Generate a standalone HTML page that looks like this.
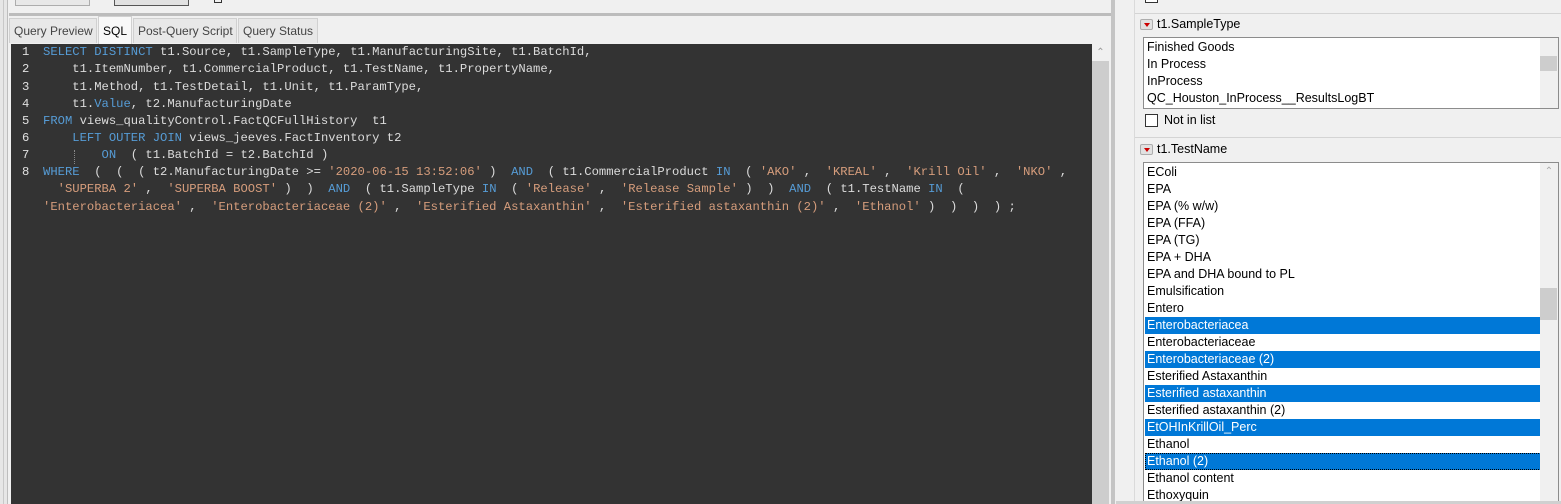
<!DOCTYPE html>
<html><head><meta charset="utf-8"><style>
*{margin:0;padding:0;box-sizing:border-box}
body{width:1561px;height:504px;background:#f0f0f0;position:relative;overflow:hidden;font-family:"Liberation Sans",sans-serif;font-size:12px;color:#000}
.abs{position:absolute}
.ed{left:11px;top:44px;width:1081px;height:460px;background:#333333;font-family:"Liberation Mono",monospace;font-size:12.2px;color:#dcdcdc;white-space:pre}
.ln{position:absolute;left:32px;height:17px;line-height:17px}
.no{position:absolute;left:11px;height:17px;line-height:17px;color:#e0e0e0}
.k{color:#569cd6}.s{color:#d69d7c}
.tab{position:absolute;top:18px;height:25px;line-height:24px;border:1px solid #d0d0d0;border-bottom:none;background:#e8e8e8;color:#444;padding:0 4px;font-size:12px;white-space:nowrap}
.li{position:absolute;left:1px;height:17px;line-height:17px;padding-left:2px;width:396px;white-space:nowrap;font-size:12.5px}
.sel{background:#0078d7;color:#fff}
.dd{position:absolute;width:13px;height:11px;border:1px solid #adadad;background:#e1e1e1;border-radius:2px}
.dd:after{content:"";position:absolute;left:3px;top:3px;border-left:3px solid transparent;border-right:3px solid transparent;border-top:4px solid #c00}
</style></head><body>
<div class="abs" style="left:0;top:0;width:8px;height:504px;background:#e6e6e6;border-right:1px solid #bdbdbd"></div>
<div class="abs" style="left:3px;top:0;width:1px;height:504px;background:#c8c8c8"></div>
<div class="abs" style="left:15px;top:0;width:75px;height:6px;border:1px solid #adadad;border-top:none;background:#e8e8e8"></div>
<div class="abs" style="left:114px;top:0;width:75px;height:6px;border:1px solid #555;border-top:none;background:#e1e1e1"></div>
<div class="abs" style="left:214px;top:0;width:8px;height:3px;border:1px solid #333;border-top:none"></div>
<div class="abs" style="left:9px;top:13px;width:1103px;height:3px;background:#bcbcbc"></div>
<div class="tab" style="left:9px;width:88px">Query Preview</div>
<div class="tab" style="left:98px;width:34px;background:#f8f8f8;color:#000;top:16px;height:28px;line-height:28px">SQL</div>
<div class="tab" style="left:133px;width:104px">Post-Query Script</div>
<div class="tab" style="left:238px;width:80px">Query Status</div>
<div class="abs ed">
<div class="no" style="top:0">1</div><div class="no" style="top:17px">2</div><div class="no" style="top:35px">3</div><div class="no" style="top:52px">4</div><div class="no" style="top:69px">5</div><div class="no" style="top:86px">6</div><div class="no" style="top:103px">7</div><div class="no" style="top:120px">8</div>
<div class="ln" style="top:0"><span class="k">SELECT DISTINCT</span> t1.Source, t1.SampleType, t1.ManufacturingSite, t1.BatchId,</div>
<div class="ln" style="top:17px">    t1.ItemNumber, t1.CommercialProduct, t1.TestName, t1.PropertyName,</div>
<div class="ln" style="top:35px">    t1.Method, t1.TestDetail, t1.Unit, t1.ParamType,</div>
<div class="ln" style="top:52px">    t1.<span class="k">Value</span>, t2.ManufacturingDate</div>
<div class="ln" style="top:69px"><span class="k">FROM</span> views_qualityControl.FactQCFullHistory  t1</div>
<div class="ln" style="top:86px">    <span class="k">LEFT OUTER JOIN</span> views_jeeves.FactInventory t2</div>
<div class="ln" style="top:103px">        <span class="k">ON</span>  ( t1.BatchId = t2.BatchId )</div>
<div class="abs" style="left:63px;top:106px;width:1px;height:14px;border-left:1px dotted #888"></div>
<div class="ln" style="top:120px"><span class="k">WHERE</span>  (  (  ( t2.ManufacturingDate &gt;= <span class="s">'2020-06-15 13:52:06'</span> )  <span class="k">AND</span>  ( t1.CommercialProduct <span class="k">IN</span>  ( <span class="s">'AKO'</span> ,  <span class="s">'KREAL'</span> ,  <span class="s">'Krill Oil'</span> ,  <span class="s">'NKO'</span> ,</div>
<div class="ln" style="top:137px">  <span class="s">'SUPERBA 2'</span> ,  <span class="s">'SUPERBA BOOST'</span> )  )  <span class="k">AND</span>  ( t1.SampleType <span class="k">IN</span>  ( <span class="s">'Release'</span> ,  <span class="s">'Release Sample'</span> )  )  <span class="k">AND</span>  ( t1.TestName <span class="k">IN</span>  (</div>
<div class="ln" style="top:155px"><span class="s">'Enterobacteriacea'</span> ,  <span class="s">'Enterobacteriaceae (2)'</span> ,  <span class="s">'Esterified Astaxanthin'</span> ,  <span class="s">'Esterified astaxanthin (2)'</span> ,  <span class="s">'Ethanol'</span> )  )  )  ) ;</div>
</div>
<div class="abs" style="left:1092px;top:44px;width:17px;height:460px;background:#cdcdcd"></div>
<div class="abs" style="left:1092px;top:44px;width:17px;height:17px;background:#f0f0f0;color:#999;font-size:10px;text-align:center;line-height:17px">&#8963;</div>
<div class="abs" style="left:1111px;top:0;width:4px;height:504px;background:#c4c4c4"></div>
<div class="abs" style="left:1134px;top:0;width:1px;height:504px;background:#dadada"></div>
<div class="abs" style="left:1145px;top:0;width:13px;height:3px;border:1px solid #333;border-top:none;background:#fff"></div>
<div class="abs" style="left:1135px;top:13px;width:426px;height:1px;background:#d4d4d4"></div>
<div class="dd" style="left:1140px;top:19px"></div>
<div class="abs" style="left:1157px;top:17px;font-size:12.5px">t1.SampleType</div>
<div class="abs" style="left:1143px;top:37px;width:416px;height:72px;border:1px solid #8c8c8c;background:#fff;overflow:hidden">
<div class="li" style="top:1px">Finished Goods</div>
<div class="li" style="top:18px">In Process</div>
<div class="li" style="top:35px">InProcess</div>
<div class="li" style="top:52px">QC_Houston_InProcess__ResultsLogBT</div>
<div class="abs" style="left:396px;top:0;width:18px;height:70px;background:#f0f0f0"></div>
<div class="abs" style="left:396px;top:18px;width:17px;height:15px;background:#cdcdcd"></div>
</div>
<div class="abs" style="left:1145px;top:114px;width:13px;height:13px;border:1px solid #333;background:#fff"></div>
<div class="abs" style="left:1164px;top:113px;font-size:12.5px">Not in list</div>
<div class="abs" style="left:1135px;top:137px;width:426px;height:1px;background:#d4d4d4"></div>
<div class="dd" style="left:1140px;top:144px"></div>
<div class="abs" style="left:1157px;top:142px;font-size:12.5px">t1.TestName</div>
<div class="abs" style="left:1143px;top:162px;width:416px;height:340px;border:1px solid #8c8c8c;border-bottom:none;background:#fff;overflow:hidden">
<div class="li" style="top:1px">EColi</div>
<div class="li" style="top:18px">EPA</div>
<div class="li" style="top:35px">EPA (% w/w)</div>
<div class="li" style="top:52px">EPA (FFA)</div>
<div class="li" style="top:69px">EPA (TG)</div>
<div class="li" style="top:86px">EPA + DHA</div>
<div class="li" style="top:103px">EPA and DHA bound to PL</div>
<div class="li" style="top:120px">Emulsification</div>
<div class="li" style="top:137px">Entero</div>
<div class="li sel" style="top:154px">Enterobacteriacea</div>
<div class="li" style="top:171px">Enterobacteriaceae</div>
<div class="li sel" style="top:188px">Enterobacteriaceae (2)</div>
<div class="li" style="top:205px">Esterified Astaxanthin</div>
<div class="li sel" style="top:222px">Esterified astaxanthin</div>
<div class="li" style="top:239px">Esterified astaxanthin (2)</div>
<div class="li sel" style="top:256px">EtOHInKrillOil_Perc</div>
<div class="li" style="top:273px">Ethanol</div>
<div class="li sel" style="top:290px;outline:1px dotted #000;outline-offset:-1px">Ethanol (2)</div>
<div class="li" style="top:307px">Ethanol content</div>
<div class="li" style="top:324px">Ethoxyquin</div>
<div class="abs" style="left:396px;top:0;width:18px;height:340px;background:#f0f0f0;color:#aaa;font-size:10px;text-align:center;line-height:17px">&#8963;</div>
<div class="abs" style="left:396px;top:125px;width:17px;height:32px;background:#cdcdcd"></div>
</div>
<div class="abs" style="left:1116px;top:501px;width:445px;height:3px;background:#d0d0d0"></div>
</body></html>
